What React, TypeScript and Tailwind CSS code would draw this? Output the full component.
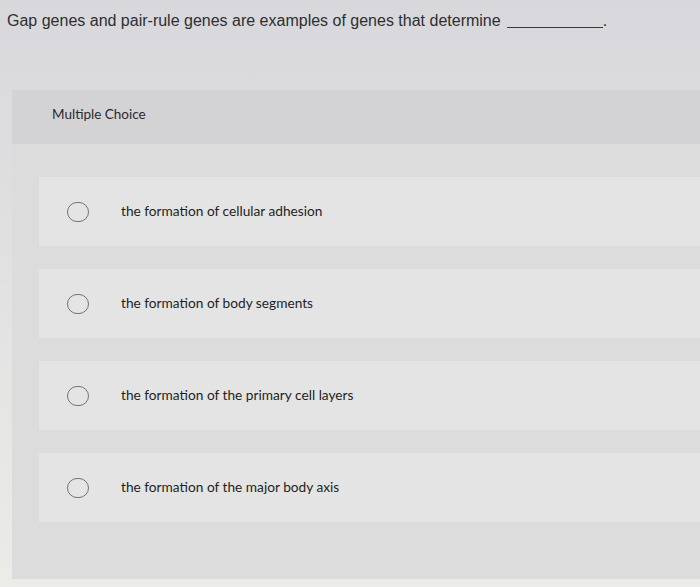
import React from 'react';

const options = [
    'the formation of cellular adhesion',
    'the formation of body segments',
    'the formation of the primary cell layers',
    'the formation of the major body axis',
];

const App: React.FC = () => {
    return (
        <div className="w-[700px] h-[587px] overflow-hidden bg-gradient-to-b from-[#d8d8dc] via-[#e2e2e2] to-[#ebebe8]" style={{ fontFamily: 'Lato, "Liberation Sans", sans-serif' }}>
            <div className="pt-[9px] pl-[7px] flex items-end text-[16px] text-[#2e2e30]" style={{ fontFamily: '"Liberation Sans", Arial, sans-serif' }}>
                <span>Gap genes and pair-rule genes are examples of genes that determine</span>
                <span className="ml-[6px] mb-[5px] w-[96px] border-b border-[#3a3a3c]"></span>
                <span>.</span>
            </div>

            <div className="mt-[57px] ml-[12px] h-[489px] bg-[#dcdcdd]">
                <div className="h-[54px] bg-[#d3d3d5] pl-[40px] pt-[14px] text-[13.5px] text-[#2a2a2c]">
                    Multiple Choice
                </div>
                <div className="pt-[33px] flex flex-col gap-[23px]">
                    {options.map((opt, i) => (
                        <div key={i} className="ml-[27px] h-[69px] bg-[#e4e4e4] flex items-center">
                            <div className="ml-[28px] w-[22px] h-[20px] rounded-full border-[1.5px] border-[#70737c]"></div>
                            <div className="ml-[32px] text-[13.7px] text-[#1f1f21]">{opt}</div>
                        </div>
                    ))}
                </div>
            </div>
        </div>
    );
};

export default App;
